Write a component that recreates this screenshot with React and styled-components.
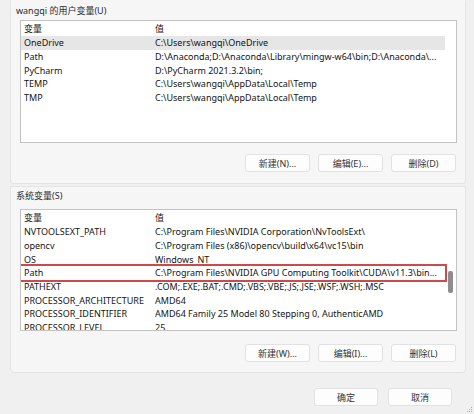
import React from 'react';
import styled, { createGlobalStyle } from 'styled-components';

const GlobalStyle = createGlobalStyle`
  html, body {
    margin: 0;
    padding: 0;
    background: #f0f0f0;
  }
  body {
    font-family: "Noto Sans", "Noto Sans CJK SC", sans-serif;
    color: #141414;
  }
`

const Window = styled.div`
  position: relative;
  width: 474px;
  height: 414px;
  box-sizing: border-box;
  padding: 0 8px 0 10px;
  background: #f0f0f0;
  overflow: hidden;
  display: flex;
  flex-direction: column;
`
const Panel = styled.section`
  display: flex;
  flex-direction: column;
  background: #f6f6f6;
  border: 1px solid #e4e4e4;
  border-top-color: ${p => p.$open ? 'transparent' : '#e4e4e4'};
  border-radius: 0 0 4px 4px;
  padding: ${p => p.$pad};
  margin-top: ${p => p.$gap || '0px'};
`
const Title = styled.div`
  height: 12px;
  line-height: 12px;
  font-size: 9px;
  color: #2b2b2b;
  margin-left: 5px;
`
const List = styled.div`
  position: relative;
  height: ${p => p.$height}px;
  margin: ${p => p.$top}px 8px 0 9px;
  background: #fff;
  border: 1px solid #c3c3c3;
  overflow: hidden;
`
const Rows = styled.div`
  margin-right: 11.5px;
`
const Row = styled.div`
  display: flex;
  align-items: center;
  height: ${p => p.$head ? '15px' : '13.7px'};
  font-size: 9px;
  white-space: nowrap;
  background: ${p => p.$selected ? '#e6e6e6' : 'transparent'};
  outline: ${p => p.$marked ? '2px solid #d04848' : 'none'};
`
const NameCell = styled.span`
  flex: 0 0 134px;
  box-sizing: border-box;
  padding-left: 3px;
  overflow: hidden;
`
const ValueCell = styled.span`
  flex: 1;
  overflow: hidden;
`
const Thumb = styled.div`
  position: absolute;
  right: 3px;
  top: ${p => p.$top}px;
  width: 5px;
  height: 22px;
  border-radius: 2px;
  background: #8d8d8d;
`
const ButtonRow = styled.div`
  display: flex;
  justify-content: flex-end;
  gap: ${p => p.$gap || 8}px;
  margin: ${p => p.$margin};
`
const Button = styled.button`
  width: ${p => p.$width || 65}px;
  height: 18px;
  padding: 0;
  box-sizing: border-box;
  background: #fdfdfd;
  border: 1px solid #e2e2e2;
  border-radius: 3px;
  font-family: inherit;
  font-size: 9px;
  color: #333;
`
const Grip = styled.svg`
  position: absolute;
  right: 1px;
  bottom: 1px;
`

const userVars = [
  ['OneDrive', 'C:\\Users\\wangqi\\OneDrive'],
  ['Path', 'D:\\Anaconda;D:\\Anaconda\\Library\\mingw-w64\\bin;D:\\Anaconda\\...'],
  ['PyCharm', 'D:\\PyCharm 2021.3.2\\bin;'],
  ['TEMP', 'C:\\Users\\wangqi\\AppData\\Local\\Temp'],
  ['TMP', 'C:\\Users\\wangqi\\AppData\\Local\\Temp'],
]

const systemVars = [
  ['NVTOOLSEXT_PATH', 'C:\\Program Files\\NVIDIA Corporation\\NvToolsExt\\'],
  ['opencv', 'C:\\Program Files (x86)\\opencv\\build\\x64\\vc15\\bin'],
  ['OS', 'Windows_NT'],
  ['Path', 'C:\\Program Files\\NVIDIA GPU Computing Toolkit\\CUDA\\v11.3\\bin...'],
  ['PATHEXT', '.COM;.EXE;.BAT;.CMD;.VBS;.VBE;.JS;.JSE;.WSF;.WSH;.MSC'],
  ['PROCESSOR_ARCHITECTURE', 'AMD64'],
  ['PROCESSOR_IDENTIFIER', 'AMD64 Family 25 Model 80 Stepping 0, AuthenticAMD'],
  ['PROCESSOR_LEVEL', '25'],
]

function VarList({ items, height, top, selected, marked, thumb }) {
  return (
    <List $height={height} $top={top}>
      <Rows>
        <Row $head>
          <NameCell>变量</NameCell>
          <ValueCell>值</ValueCell>
        </Row>
        {items.map(([name, value]) => (
          <Row key={name} $selected={name === selected} $marked={name === marked}>
            <NameCell>{name}</NameCell>
            <ValueCell>{value}</ValueCell>
          </Row>
        ))}
      </Rows>
      {thumb != null && <Thumb $top={thumb} />}
    </List>
  )
}

export default function App() {
  return (
    <>
      <GlobalStyle />
      <Window>
        <Panel $open $pad="4px 0 11px 0">
          <Title>wangqi 的用户变量(U)</Title>
          <VarList items={userVars} height={121} top={3} selected="OneDrive" />
          <ButtonRow $margin="11px 9px 0 0">
            <Button>新建(N)...</Button>
            <Button>编辑(E)...</Button>
            <Button>删除(D)</Button>
          </ButtonRow>
        </Panel>

        <Panel $gap="2px" $pad="3px 0 10px 0">
          <Title>系统变量(S)</Title>
          <VarList items={systemVars} height={120} top={7} marked="Path" thumb={61} />
          <ButtonRow $margin="13px 9px 0 0">
            <Button>新建(W)...</Button>
            <Button>编辑(I)...</Button>
            <Button>删除(L)</Button>
          </ButtonRow>
        </Panel>

        <ButtonRow $gap={10} $margin="15px 14px 0 0">
          <Button $width={64}>确定</Button>
          <Button $width={64}>取消</Button>
        </ButtonRow>

        <Grip width="6" height="6" viewBox="0 0 6 6">
          <rect x="4" y="0" width="1" height="1" fill="#aaa" />
          <rect x="2" y="2" width="1" height="1" fill="#aaa" />
          <rect x="4" y="2" width="1" height="1" fill="#aaa" />
          <rect x="0" y="4" width="1" height="1" fill="#aaa" />
          <rect x="2" y="4" width="1" height="1" fill="#aaa" />
          <rect x="4" y="4" width="1" height="1" fill="#aaa" />
        </Grip>
      </Window>
    </>
  )
}
